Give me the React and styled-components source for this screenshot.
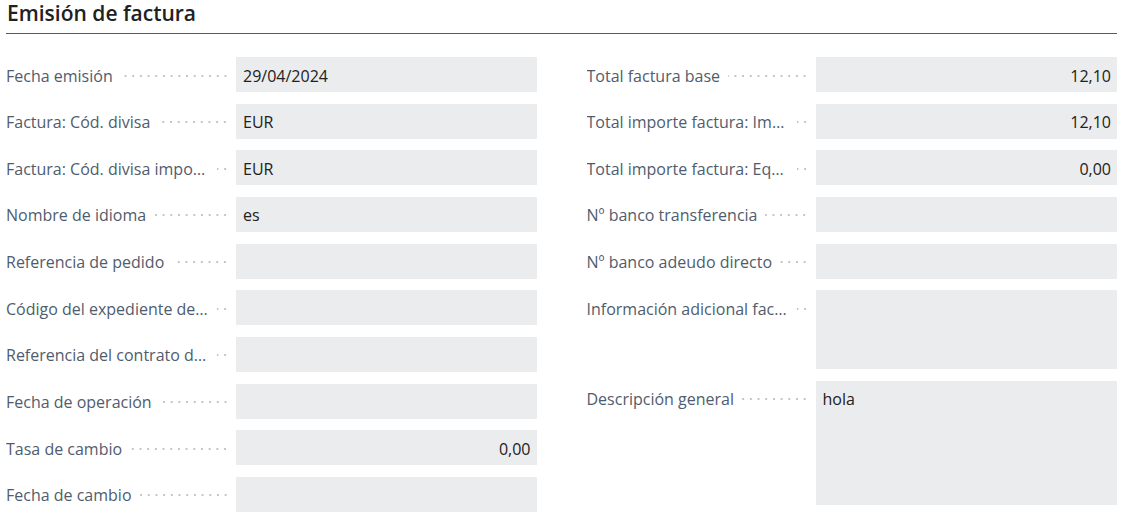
import styled, { createGlobalStyle } from "styled-components";

const GlobalStyle = createGlobalStyle`
  html, body {
    margin: 0;
    padding: 0;
    background: #ffffff;
  }
  body {
    font-family: "Open Sans", "Noto Sans", "Liberation Sans", sans-serif;
  }
`;

const leftFields = [
  { label: "Fecha emisión", value: "29/04/2024" },
  { label: "Factura: Cód. divisa", value: "EUR" },
  { label: "Factura: Cód. divisa importe", value: "EUR" },
  { label: "Nombre de idioma", value: "es" },
  { label: "Referencia de pedido", value: "" },
  { label: "Código del expediente de contratación", value: "" },
  { label: "Referencia del contrato de adjudicación", value: "" },
  { label: "Fecha de operación", value: "" },
  { label: "Tasa de cambio", value: "0,00", numeric: true },
  { label: "Fecha de cambio", value: "" },
];

const rightFields = [
  { label: "Total factura base", value: "12,10", numeric: true },
  { label: "Total importe factura: Importe", value: "12,10", numeric: true },
  { label: "Total importe factura: Equivalencia", value: "0,00", numeric: true },
  { label: "Nº banco transferencia", value: "" },
  { label: "Nº banco adeudo directo", value: "" },
  { label: "Información adicional factura", value: "", height: 79 },
  { label: "Descripción general", value: "hola", height: 124 },
];

const Page = styled.div`
  padding: 0 11px 0 6px;
`;

const Header = styled.div`
  padding: 0 0 6px 1px;
  border-bottom: 1px solid #505c6d;
`;

const Title = styled.h2`
  margin: 0;
  font-size: 21px;
  line-height: 27px;
  font-weight: 600;
  color: #212121;
`;

const Columns = styled.div`
  display: grid;
  grid-template-columns: 1fr 1fr;
  column-gap: 50px;
  margin-top: 23px;
`;

const Column = styled.div`
  display: flex;
  flex-direction: column;
  gap: 11.67px;
`;

const Row = styled.div`
  display: flex;
  align-items: flex-start;
`;

const Caption = styled.div`
  width: ${(p) => p.$width}px;
  flex: none;
  display: flex;
  align-items: center;
  padding-top: 8.5px;
  line-height: 20px;
  font-size: 16px;
  color: #505c6d;
`;

const CaptionText = styled.span`
  flex: 0 1 auto;
  min-width: 0;
  white-space: nowrap;
  overflow: hidden;
  text-overflow: ellipsis;
`;

const Leader = styled.span`
  flex: 1 0 12px;
  height: 20px;
  margin: 0 7px 0 8px;
  background-image: radial-gradient(circle, #c4c4c4 0.8px, transparent 1.3px);
  background-size: 7.7px 20px;
  background-position: right center;
  background-repeat: repeat-x;
`;

const Field = styled.div`
  flex: 1;
  min-width: 0;
  box-sizing: border-box;
  height: ${(p) => p.$height || 35}px;
  padding: 8.5px 6px 0 7px;
  line-height: 20px;
  font-size: 16px;
  color: #212121;
  background: #ebecee;
  text-align: ${(p) => (p.$numeric ? "right" : "left")};
  white-space: nowrap;
  overflow: hidden;
`;

const FieldRow = ({ field, captionWidth }) => (
  <Row>
    <Caption $width={captionWidth}>
      <CaptionText>{field.label}</CaptionText>
      <Leader />
    </Caption>
    <Field $numeric={field.numeric} $height={field.height}>
      {field.value}
    </Field>
  </Row>
);

export default function App() {
  return (
    <Page>
      <GlobalStyle />
      <Header>
        <Title>Emisión de factura</Title>
      </Header>
      <Columns>
        <Column>
          {leftFields.map((f) => (
            <FieldRow key={f.label} field={f} captionWidth={230} />
          ))}
        </Column>
        <Column>
          {rightFields.map((f) => (
            <FieldRow key={f.label} field={f} captionWidth={229} />
          ))}
        </Column>
      </Columns>
    </Page>
  );
}
